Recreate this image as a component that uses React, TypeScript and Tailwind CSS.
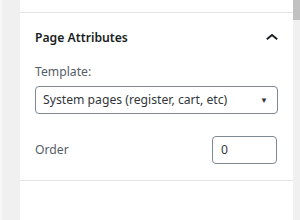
import React from 'react';

const App: React.FC = () => {
  return (
    <div className="w-[300px] h-[220px] overflow-hidden bg-[#f1f1f1] flex" style={{ fontFamily: '"Noto Sans", "Open Sans", sans-serif' }}>
      <div className="w-[2px] bg-[#f7f7f7]" />
      <div className="w-[18px] bg-[#f0f0f0]" />
      <div className="w-[273px] bg-white flex flex-col">
        <div className="h-[13px] border-b border-[#e2e4e7]" />
        <div className="px-[15px] pt-[11px] pb-[16px] border-b border-[#e2e4e7]">
          <div className="flex items-center justify-between h-[28px]">
            <h2 className="text-[12.2px] font-semibold text-[#191e23]">Page Attributes</h2>
            <svg width="24" height="24" viewBox="0 0 24 24" className="mr-[-6px]">
              <path d="M6.2 12.6L12 7.8l5.8 4.8-1.2 1.4L12 10.3l-4.6 3.7-1.2-1.4z" fill="#191e23" />
            </svg>
          </div>
          <div className="mt-[11px] text-[12.2px] text-[#555d66] leading-[18px]">Template:</div>
          <div className="mt-[5px] h-[28px] rounded-[4px] border border-[#7e8993] flex items-center justify-between pl-[7px] pr-[9px]">
            <span className="text-[12.2px] text-[#32373c]">System pages (register, cart, etc)</span>
            <span className="text-[8px] text-[#32373c]">▼</span>
          </div>
          <div className="mt-[22px] flex items-center justify-between pr-[1px]">
            <span className="text-[12.2px] text-[#555d66]">Order</span>
            <div className="w-[65px] h-[28px] rounded-[4px] border border-[#7e8993] flex items-center pl-[8px] text-[12.2px] text-[#32373c]">0</div>
          </div>
        </div>
        <div className="flex-1" />
      </div>
      <div className="w-[7px] bg-[#f0f0f0] flex flex-col">
        <div className="h-[20px] bg-[#c1c1c1]" />
      </div>
    </div>
  );
};

export default App;
